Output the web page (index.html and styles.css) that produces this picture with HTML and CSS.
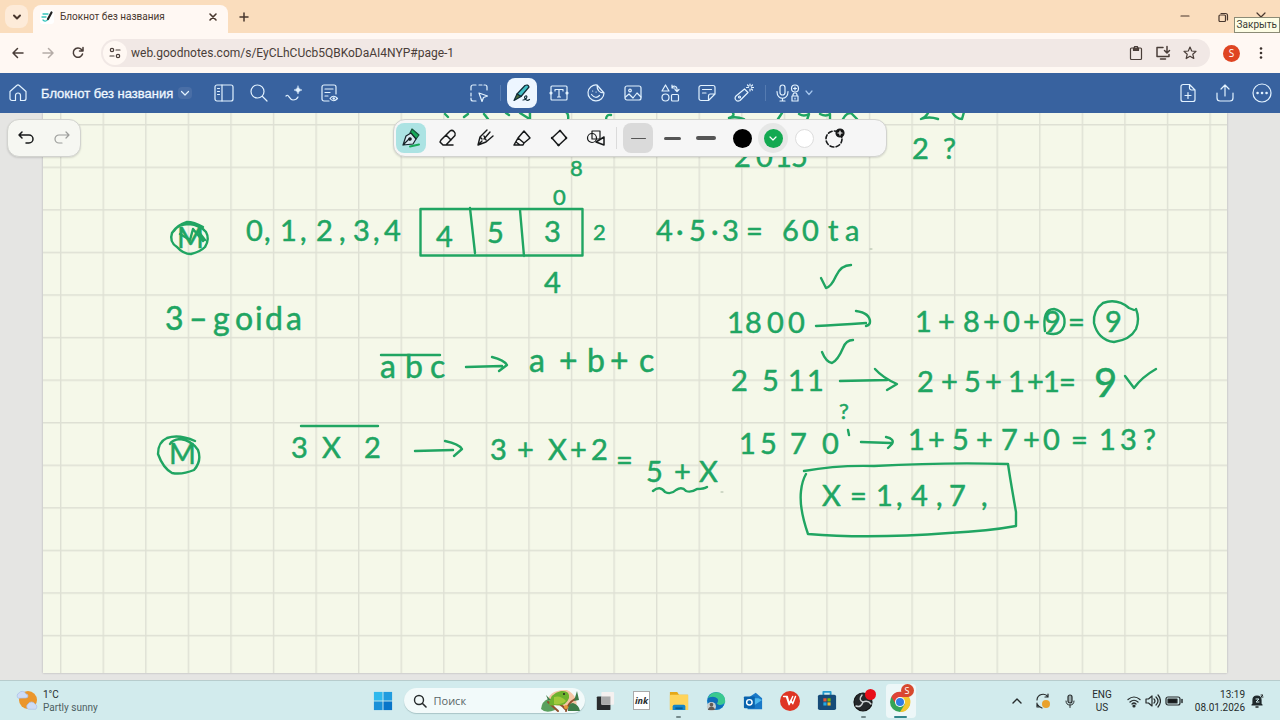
FILE: index.html
```html
<!DOCTYPE html>
<html lang="ru">
<head>
<meta charset="utf-8">
<meta name="viewport" content="width=device-width, initial-scale=1">
<title>Блокнот без названия</title>
<link rel="stylesheet" href="styles.css">
</head>
<body>
<div class="screen">
  <header class="tabstrip">
    <button class="tab-search" aria-label="Поиск вкладок"><svg class="i12" viewBox="0 0 12 12"><path d="M3 4.5l3 3 3-3" stroke-width="2"/></svg></button>
    <div class="tab">
      <svg class="i14" viewBox="0 0 14 14"><rect width="14" height="14" rx="3" fill="#fff" stroke="none"/><path d="M3 4h5M2 7h4M3 10c2 2 4 1 5-1" stroke="#35c3bb" stroke-width="1.3"/><path d="M11.500 2.500L8 9" stroke="#222" stroke-width="2.200"/></svg>
      <span class="tab-title">Блокнот без названия</span>
      <button class="tab-close" aria-label="Закрыть вкладку"><svg class="i12" viewBox="0 0 12 12"><path d="M3 3l6 6M9 3l-6 6" stroke-width="1.600"/></svg></button>
    </div>
    <button class="new-tab" aria-label="Новая вкладка"><svg class="i12" viewBox="0 0 12 12"><path d="M6 2v8M2 6h8" stroke-width="1.500"/></svg></button>
    <div class="window-buttons">
      <button aria-label="Свернуть"><svg class="i12" viewBox="0 0 12 12"><path d="M2 5h8"/></svg></button>
      <button aria-label="Окно"><svg class="i12" viewBox="0 0 12 12"><rect x="2" y="4" width="6.500" height="6.500" rx="1"/><path d="M4 2.500h4.500a2 2 0 0 1 2 2V9"/></svg></button>
      <button aria-label="Закрыть"><svg class="i12" viewBox="0 0 12 12"><path d="M2 2l8 8M10 2l-8 8"/></svg></button>
      <span class="tooltip" role="tooltip">Закрыть</span>
    </div>
  </header>

  <div class="browser-bar">
    <nav class="nav-buttons">
      <button aria-label="Назад"><svg class="i14" viewBox="0 0 14 14"><path d="M12 7H2.500M6.500 2.500L2 7l4.500 4.500" stroke-width="1.500"/></svg></button>
      <button class="faded" aria-label="Вперёд"><svg class="i14" viewBox="0 0 14 14"><path d="M2 7h9.500M7.500 2.500L12 7l-4.500 4.500" stroke-width="1.500"/></svg></button>
      <button aria-label="Обновить"><svg class="i14" viewBox="0 0 14 14"><path d="M11.500 8A4.700 4.700 0 1 1 10.500 3.500L12 5M12 1.500V5H8.500" stroke-width="1.500"/></svg></button>
    </nav>
    <div class="omnibox">
      <button class="site-info" aria-label="Сведения о сайте"><svg class="i14" viewBox="0 0 14 14"><circle cx="4" cy="4" r="1.700"/><path d="M8 4h4M2 10h4"/><circle cx="10" cy="10" r="1.700"/></svg></button>
      <input class="url" type="text" aria-label="Адрес" value="web.goodnotes.com/s/EyCLhCUcb5QBKoDaAI4NYP#page-1">
      <button aria-label="Буфер обмена"><svg class="i16" viewBox="0 0 16 16"><rect x="2.500" y="3" width="11" height="11.500" rx="1"/><path d="M5.500 3v2.500h5V3" fill="#51433d"/><path d="M6.500 3V1.500h3V3"/></svg></button>
      <button aria-label="Установить приложение"><svg class="i16" viewBox="0 0 16 16"><path d="M8 2.500H2v9h12V9.500M5.500 14h5M12 1.500v6M9.500 5.500L12 8l2.500-2.500" stroke-width="1.500"/></svg></button>
      <button aria-label="В закладки"><svg class="i16" viewBox="0 0 16 16"><path d="M8 2l1.700 4 4.300.4-3.200 2.900 1 4.200L8 11.200l-3.800 2.300 1-4.200L2 6.400 6.300 6z"/></svg></button>
    </div>
    <button class="avatar" aria-label="Профиль">S</button>
    <button class="more" aria-label="Меню"><svg class="i14" viewBox="0 0 14 14"><g fill="#3b312d" stroke="none"><circle cx="7" cy="2.500" r="1.300"/><circle cx="7" cy="7" r="1.300"/><circle cx="7" cy="11.500" r="1.300"/></g></svg></button>
  </div>

  <div class="appbar">
    <div class="app-left">
      <button aria-label="Главная"><svg class="i20" viewBox="0 0 20 20"><path d="M7.500 17.500H4a2 2 0 0 1-2-2V8.500L8.700 2.500a2 2 0 0 1 2.600 0L18 8.500v7a2 2 0 0 1-2 2h-3.500V12.500a2.500 2.500 0 0 0-5 0z"/></svg></button>
      <button class="doc-name">Блокнот без названия<span class="name-chevron"><svg class="i12" viewBox="0 0 12 12"><path d="M2.500 4.500L6 8l3.500-3.500"/></svg></span></button>
      <button aria-label="Боковая панель"><svg class="i20" viewBox="0 0 20 20"><rect x="1" y="2" width="18" height="16" rx="2"/><path d="M8 2v16M3.500 5.500h2M3.500 8.500h2M3.500 11.500h2"/></svg></button>
      <button aria-label="Поиск"><svg class="i20" viewBox="0 0 20 20"><circle cx="8.500" cy="8.500" r="6.500"/><path d="M13.500 13.500l4.500 4.500"/></svg></button>
      <button aria-label="ИИ"><svg class="i20" viewBox="0 0 20 20"><path d="M2 13c3-3 3 4 7 4 3 0 4-1 5-3"/><path d="M14 3q.5 3.500 4 4-3.500.5-4 4-.5-3.500-4-4 3.500-.5 4-4z" fill="#e2f2ff" stroke-width=".5"/></svg></button>
      <button aria-label="Просмотр"><svg class="i20" viewBox="0 0 20 20"><path d="M10 18H5a2 2 0 0 1-2-2V4a2 2 0 0 1 2-2h10a2 2 0 0 1 2 2v7M6 6h8M6 9.500h5M6 13h3"/><path d="M11 15.500q3.500-4.500 7.500 0-4 4.500-7.500 0z"/><circle cx="14.700" cy="15.500" r=".7"/></svg></button>
    </div>
    <div class="app-tools">
      <button aria-label="Выделение"><svg class="i20" viewBox="0 0 20 20"><path d="M7 2H4a2 2 0 0 0-2 2v3M2 10v3M2 15v1a2 2 0 0 0 2 2h3M10 2h3M15 2h1a2 2 0 0 1 2 2v3" /><path d="M10 10l8.500 3-4 1.500-1.500 4z"/></svg></button>
      <span class="rule"></span>
      <button class="tool-active" aria-label="Перо"><svg class="i20" viewBox="0 0 20 20"><path d="M5 11L13 2.500q3-1.500 4 1.500L9 13.500z" fill="#42bfc6" stroke="#102c38"/><path d="M5 11l-3 6.500L9 13.500z" fill="#496b39" stroke="#102c38"/><path d="M11 17c4 0 5-5 2.500-4s.5 6 4 3.500" stroke="#102c38"/></svg></button>
      <button aria-label="Текст"><svg class="i20" viewBox="0 0 20 20"><rect x="2" y="3" width="16" height="14" rx="1"/><path d="M6 8V6.500h8V8M10 6.500v7.500M8.500 14h3"/><circle cx="2" cy="10" r="1" fill="#fff"/><circle cx="18" cy="10" r="1" fill="#fff"/></svg></button>
      <button aria-label="Стикеры"><svg class="i20" viewBox="0 0 20 20"><path d="M11 2a8 8 0 1 0 7 8c-4 0-7-2-7-8zM11 2l7 8"/><path d="M5.500 11.500q4 5 8 1M6.500 8h.2M10 9h.2"/></svg></button>
      <button aria-label="Изображение"><svg class="i20" viewBox="0 0 20 20"><rect x="2" y="3" width="16" height="14" rx="2"/><circle cx="7" cy="7.500" r="1.300"/><path d="M2.500 14l3.500-3 4 4 4-5 4 4"/></svg></button>
      <button aria-label="Элементы"><svg class="i20" viewBox="0 0 20 20"><path d="M5.500 2L9 8H2zM12 5c1-3 5-2 5 1v2M15 6.500l2 2 2-2M12 2v3h3"/><circle cx="5.500" cy="14.500" r="3.500"/><rect x="11.500" y="11.500" width="7" height="6.500" rx="1"/></svg></button>
      <button aria-label="Заметка"><svg class="i20" viewBox="0 0 20 20"><path d="M11.500 17.500H4a2 2 0 0 1-2-2v-11a2 2 0 0 1 2-2h12a2 2 0 0 1 2 2V11zM11.500 17.500V13a2 2 0 0 1 2-2H18M5.500 6.500h9M5.500 10H9"/></svg></button>
      <button aria-label="Лазер"><svg class="i20" viewBox="0 0 20 20"><path d="M2 13l8.500-7L14 9.500l-8 8q-3 1.500-4.500-1-1-2 .5-3.500z"/><circle cx="5.500" cy="14" r="1"/><path d="M16 1v2M16 6v2M12.500 4.500h2M17.500 4.500h2M13.500 2l1 1M17.500 6l1 1M18.500 2l-1 1"/></svg></button>
      <span class="rule"></span>
      <button class="mic" aria-label="Запись"><svg class="wide" viewBox="0 0 38 20"><rect x="5" y="2" width="5" height="10" rx="2.500"/><path d="M2 8.500c0 9 11 9 11 0M7.500 15.500V18M5 18h5"/><circle cx="20" cy="5.500" r="3.500"/><path d="M20 4v3M18.500 5.500h3M17 13v5h6v-5zM18 13v-1a2 2 0 0 1 4 0v1M20 15v1"/><path d="M31 8l3 3.500L37 8" stroke="#a4c5ed"/></svg></button>
    </div>
    <div class="app-right">
      <button aria-label="Добавить страницу"><svg class="i20" viewBox="0 0 20 20"><path d="M11.500 1.500H5a2 2 0 0 0-2 2v13a2 2 0 0 0 2 2h10a2 2 0 0 0 2-2V7zM11.500 1.500V5a2 2 0 0 0 2 2H17M10 9.500v6M7 12.500h6"/></svg></button>
      <button aria-label="Поделиться"><svg class="i20" viewBox="0 0 20 20"><path d="M10 13V2M6 6l4-4 4 4M2 10v5a3 3 0 0 0 3 3h10a3 3 0 0 0 3-3v-5"/></svg></button>
      <button aria-label="Ещё"><svg class="i20" viewBox="0 0 20 20"><circle cx="10" cy="10" r="9"/><path d="M5.500 10h.1M10 10h.1M14.500 10h.1" stroke-width="2.500"/></svg></button>
    </div>
  </div>

  <main class="workspace">
    <svg class="page" viewBox="43 113 1184 560" role="img" aria-label="Страница с рукописными записями">
      <defs><pattern id="grid" x="60" y="124" width="42.570" height="42.570" patternUnits="userSpaceOnUse"><path d="M.7 0V42.570M0 .7H42.570" stroke="#dee0d4" stroke-width="1.400"/></pattern></defs>
      <rect x="43" y="113" width="1184" height="560" fill="#f5f8e9"/>
      <rect x="43" y="113" width="1184" height="560" fill="url(#grid)"/>
      <g class="notes">
        <text y="167" x="734 756 775 791">2015</text>
        <text y="176" x="570" class="small">8</text>
        <text y="159" x="912 943">2?</text>
        <text y="248" x="177">M</text>
        <text y="241" x="246 264 280 300 316 339 353 373 384">0,1,2,3,4</text>
        <text y="247" x="436">4</text><text y="243" x="487">5</text><text y="242" x="544">3</text>
        <text y="205" x="553" class="small">0</text><text y="240" x="593" class="small">2</text><text y="293" x="544">4</text>
        <text y="241" x="656 676 689 711 722 746 782 802 828 845">4·5·3=60ta</text>
        <text y="330" x="165 189 213 235 255 265 286" class="lower">3–goida</text>
        <text y="378" x="380 405 430" class="lower">abc</text>
        <text y="372" x="529 559 587 610 639" class="lower">a+b+c</text>
        <text y="333" x="727 745 767 788">1800</text>
        <text y="391" x="731 762 788 807">2511</text>
        <text y="454" x="739 760 790 822">1570</text>
        <text y="332" x="915 938 963 983 1003 1023 1044 1068 1105">1+8+0+9=9</text>
        <text y="392" x="917 941 964 985 1008 1027 1043 1059">2+5+1+1=</text><text y="397" x="1094" class="large">9</text>
        <text y="450" x="908 928 952 976 1001 1023 1043 1071 1099 1120 1143">1+5+7+0=13?</text>
        <text y="464" x="169">M</text>
        <text y="458" x="291 322 364">3X2</text>
        <text y="460" x="490 517 548 570 591">3+X+2</text>
        <text y="470" x="616">=</text><text y="482" x="646 674 699">5+X</text>
        <text y="419" x="839" class="small">?</text>
        <text y="506" x="822 850 876 896 911 936 949 981">X=1,4,7,</text>
      </g>
      <g class="ink">
        <path d="M445 114l3 3M468 114l-4 3M484 114l4 5M506 113l3 2M520 113l8 5M530 112v7M566 112q3 2 2 8M606 120q0-6 5-5"/>
        <path d="M733 113q2 3-4 5 7-2 15 1M778 119l4-6M799 114q5 3 10 0l-2 6M820 114q6 3 10 0v6M843 119q3-6 8-6l6 6M928 113q-2 4-7 6 8-3 17 0M952 112q4 7 10 7l2-7"/>
        <path d="M203 227q-9-5-16-5-10 3-15 11-3 9 5 14 6 7 14 7 9-2 14-7 5-8 1-15-6-7-17-8-11 0-15 7M180 234l10 6 3-11 10 12M198 231l7 9"/>
        <path d="M420.500 209h162v46.500h-162zM470 208l5 45M520 210l4 46"/>
        <path d="M821 278l5 10q5-1 10-12t15-11M822 352q4 10 10 11 6-3 11-15 3-8 10-8"/>
        <path d="M816 326q20-1 50-3M856 311q14 2 14 11 0 3-4 4M840 381l47-1M875 369q8 9 22 15l-10 6M861 442l30 1M886 437q9 2 6 7l-4 4"/>
        <path d="M1045 331q-3-22 9-22 13 3 10 17-4 11-17 7M1134 310l-5-2q-12-10-26-5-10 7-9 20 4 17 20 19 16-2 22-13 4-10 0-20M1125 376l9 12q8-11 22-19"/>
        <path d="M381 355h59M466 367l36-1M492 357q12 3 15 8l-8 6M301 426h77M415 451l38-1M445 441q14 3 17 8l-8 7"/>
        <path d="M195 441q-16-7-28-3-9 4-9 16 5 14 14 19 10 2 22-3 8-9 4-20-7-10-18-11-8 1-10 5M653 491q7-6 12 1 6 3 11-2 6-4 10 1 5 2 11-2 7 0 10-2M848 430l1 5"/>
        <path d="M804 471q32-6 70-5 75-4 134-2 2 14 8 48v14q-27 5-67 7-80 6-141 1-9-26-7-43 1-10 5-17"/>
      </g>
      <path d="M870 249h2M721 492h2" stroke="#a9b8a3" stroke-width="1"/>
    </svg>

    <div class="history">
      <button aria-label="Отменить"><svg class="i20" viewBox="0 0 20 20"><path d="M3 7h10a4 4 0 0 1 0 8h-3M6 4L3 7l3 3" stroke-width="1.500"/></svg></button>
      <button class="faded" aria-label="Повторить"><svg class="i20" viewBox="0 0 20 20"><path d="M17 7H7a4 4 0 0 0 0 8h3M14 4l3 3-3 3"/></svg></button>
    </div>

    <div class="pen-bar">
      <div class="pens">
        <button class="pen-active" aria-label="Перьевая ручка"><svg class="i20" viewBox="0 0 20 20"><path d="M9 5l2-4 7 6-3 4z" fill="#17aa59" stroke="#17543b"/><path d="M2 17L5 8l5-3 5 6-3 5zM2 17l6-6" fill="#d8e9f1" stroke="#17242a"/><circle cx="9" cy="11" r="1.200" fill="#17242a"/><path d="M9 18.500l9-2" stroke="#17aa59" stroke-width="2"/></svg></button>
        <button aria-label="Ластик"><svg class="i20" viewBox="0 0 20 20"><path d="M3 12L12 3q2-1.500 4 .5t1 4L8 17H5l-3-3zM8 7l5 5M9 17h6" stroke-width="1.500"/></svg></button>
        <button aria-label="Карандаш"><svg class="i20" viewBox="0 0 20 20"><path d="M12 2L5 9 3 17l8-3 7-6M3 17l4-4M5 9l2 2M9 8l2 4M9 11l6-7" stroke-width="1.400"/></svg></button>
        <button aria-label="Маркер"><svg class="i20" viewBox="0 0 20 20"><path d="M12 3l6 7-6 5-6-5zM6 10l-4 7h9l1-2M4 14l4 3" stroke-width="1.500"/></svg></button>
        <button aria-label="Форма"><svg class="i20" viewBox="0 0 20 20"><path d="M11 2.500l6.500 7.500-8 7.500L3 10z" stroke-width="1.500"/><path d="M11 3h.1M17 10h.1M9.500 17h.1M3 10h.1" stroke-width="2.400"/></svg></button>
        <button aria-label="Фигуры"><svg class="i20" viewBox="0 0 20 20"><circle cx="6" cy="10" r="4.500"/><rect x="6" y="3" width="8" height="8"/><path d="M10 14l8-5v8z" stroke-width="1.500"/></svg></button>
      </div>
      <span class="pen-rule"></span>
      <div class="widths">
        <button class="width-active" aria-label="Тонкая линия"><span class="line thin"></span></button>
        <button aria-label="Средняя линия"><span class="line medium"></span></button>
        <button aria-label="Толстая линия"><span class="line thick"></span></button>
      </div>
      <div class="colors">
        <button aria-label="Чёрный"><span class="dot black"></span></button>
        <button class="color-active" aria-label="Зелёный"><span class="dot green"><svg class="i12" viewBox="0 0 12 12"><path d="M3 5l3 3 3-3"/></svg></span></button>
        <button aria-label="Белый"><span class="dot white"></span></button>
        <button aria-label="Добавить цвет"><svg class="i20" viewBox="0 0 20 20"><circle cx="9" cy="11" r="8" stroke-dasharray="4 2.300" stroke-width="1.600"/><circle cx="15" cy="5" r="4" fill="#111"/><path d="M15 3v4M13 5h4" stroke="#fff" stroke-width="1.200"/></svg></button>
      </div>
    </div>
  </main>

  <footer class="taskbar">
    <button class="weather">
      <svg class="i24" viewBox="0 0 24 24"><circle cx="13" cy="11" r="9" fill="#eb962c" stroke="none"/><path d="M3 9a3 3 0 0 1 1-5 4 4 0 0 1 7 1 2 2 0 0 1 0 4zM13 20a3 3 0 0 1 0-5 4 4 0 0 1 7 0 3 3 0 0 1 1 5z" fill="#cedcf6" stroke="#a9bfe8" stroke-width=".7"/></svg>
      <span class="weather-text"><span>1°C</span><span class="muted">Partly sunny</span></span>
    </button>
    <div class="apps">
      <button aria-label="Пуск"><svg class="i22" viewBox="0 0 22 22"><g stroke="none"><path d="M1 1h9.500v9.500H1z" fill="#30b9ed"/><path d="M11.500 1H21v9.500h-9.500z" fill="#219cdf"/><path d="M1 11.500h9.500V21H1z" fill="#1b91d8"/><path d="M11.500 11.500H21V21h-9.500z" fill="#0875c9"/></g></svg></button>
      <div class="search">
        <svg class="i14" viewBox="0 0 14 14"><circle cx="6" cy="6" r="4.500" stroke-width="1.400"/><path d="M9.500 9.500L13 13" stroke-width="1.600"/></svg>
        <input type="search" aria-label="Поиск" placeholder="Поиск">
        <svg class="parrot" viewBox="0 0 42 24"><path d="M7 15Q8 0 27 1q12 6 9 19z" fill="#f4c5a5" stroke="none"/><path d="M1 20q1-8 7-10 6 4 7 11-9 4-14-1z" fill="#5aa05e" stroke="none"/><path d="M11 12q10 2 14 8M8 13l10 9M26 22q2-8 9-12" stroke="#91502d" stroke-width="2"/><path d="M9 16q1-12 12-14 9-1 8 7-3 9-14 7-3 1-6 0z" fill="#6eb22e" stroke="none"/><path d="M14 8q7-2 12 4-5 4-12 3z" fill="#a1c93b" stroke="none"/><circle cx="24" cy="5" r="1" fill="#222" stroke="none"/><path d="M28 22q0-8 5-8 6 2 7 8zM34 12l3-10 2 9zM8 11L6 6l5 5z" fill="#3d7c48" stroke="none"/><circle cx="26" cy="18" r="2" fill="#e69a39" stroke="none"/></svg>
      </div>
      <button aria-label="Представление задач"><svg class="i22" viewBox="0 0 22 22"><g stroke="none"><rect x="2" y="6" width="15" height="15" rx="1" fill="#292b2d"/><rect x="7" y="1" width="14" height="14" rx="1" fill="#f5f1f0"/><rect x="7" y="6" width="10" height="9" fill="#aaa"/></g></svg></button>
      <button aria-label="Ink"><span class="ink-app">ink</span></button>
      <button class="running" aria-label="Проводник"><svg class="i22" viewBox="0 0 22 22"><g stroke="none"><path d="M1 1h8l2 3h10v17H1z" fill="#e5a819"/><rect x="1" y="4" width="20" height="17" rx="1" fill="#ffd45a"/><path d="M4 21v-4q0-2 2-2h10q2 0 2 2v4z" fill="#1686c8"/><path d="M7 18h8v2H7z" fill="#075c93"/></g></svg></button>
      <button aria-label="Edge"><svg class="i22" viewBox="0 0 22 22"><g stroke="none"><circle cx="11" cy="11" r="10" fill="#1682c9"/><path d="M2 8Q6-1 15 2q7 3 6 11-5 4-10 2 5-7-2-8-4-1-7 1z" fill="#3ac98f"/><path d="M2 8q7-4 11 1 1 2-1 5 4 3 8 1-4 6-12 5Q2 16 2 8z" fill="#0f6eb9"/><circle cx="6" cy="17" r="5" fill="#c8cecf"/><circle cx="6" cy="15" r="2" fill="#635b56"/><path d="M2 21q1-4 4-4t4 4z" fill="#635b56"/></g></svg></button>
      <button aria-label="Outlook"><svg class="i22" viewBox="0 0 22 22"><path d="M5 8l9-6 7 6v12H5z" fill="#1979c8" stroke="none"/><path d="M5 8h12l4 2-9 6z" fill="#50b9ed" stroke="none"/><rect x="1" y="6" width="12" height="13" rx="1" fill="#0963ae" stroke="none"/><circle cx="7" cy="12.500" r="3" stroke="#fff" stroke-width="1.600"/></svg></button>
      <button aria-label="WPS"><svg class="i22" viewBox="0 0 22 22"><circle cx="11" cy="11" r="11" fill="#df3524" stroke="none"/><path d="M4 6h4l2 8 2-4 2 4 3-8M7 6l3 9 4-9" stroke="#fff" stroke-width="1.600"/></svg></button>
      <button aria-label="Store"><svg class="i22" viewBox="0 0 22 22"><path d="M7 5V1h8v4" stroke="#249bcf" stroke-width="2"/><rect x="1" y="4" width="20" height="17" rx="2" fill="#164b78" stroke="none"/><g stroke="none"><path d="M7 8h3.500v3.500H7z" fill="#e95734"/><path d="M11.500 8H15v3.500h-3.500z" fill="#7fba00"/><path d="M7 12.500h3.500V16H7z" fill="#27a9e0"/><path d="M11.500 12.500H15V16h-3.500z" fill="#f5bb2b"/></g></svg></button>
      <button class="running" aria-label="OBS"><svg class="i24" viewBox="0 0 24 24"><circle cx="11" cy="13" r="9" fill="#24282b" stroke="#111"/><path d="M10 6q-4 5 1 7 5-2 8 2M11 13q-2 6-7 4" stroke="#ccd2d3" stroke-width="1.500"/><circle cx="18.500" cy="5.500" r="5.500" fill="#e80e19" stroke="none"/></svg></button>
      <button class="running current" aria-label="Chrome"><svg class="i24" viewBox="0 0 24 24"><g stroke="none"><circle cx="11" cy="13" r="10" fill="#35a457"/><path d="M2.300 8A10 10 0 0 1 20 8H11l-4 7z" fill="#df4337"/><path d="M20 8a10 10 0 0 1-9 15l5-8q0-5-5-7z" fill="#f4c62e"/><circle cx="11" cy="13" r="5" fill="#fff"/><circle cx="11" cy="13" r="4" fill="#317de4"/></g></svg><span class="badge">S</span></button>
    </div>
    <div class="tray">
      <button aria-label="Скрытые значки"><svg class="i12" viewBox="0 0 12 12"><path d="M2 8l4-4 4 4" stroke-width="1.400"/></svg></button>
      <button aria-label="Обновления"><svg class="i16" viewBox="0 0 16 16"><path d="M2 7a6 6 0 0 1 11-3V1M13 4h-3M2 10v4h3M2 11q2 3 5 4"/><circle cx="11" cy="11" r="4" fill="#e9a22c" stroke="none"/></svg></button>
      <button aria-label="Микрофон"><svg class="i14" viewBox="0 0 14 14"><rect x="5" y="1" width="4" height="8" rx="2" fill="#9cacae"/><path d="M3 7q0 4 4 4t4-4M7 11v2.500" stroke-width="1"/></svg></button>
      <button class="lang"><span>ENG</span><span>US</span></button>
      <button class="status" aria-label="Сеть, звук, батарея">
        <svg class="i14" viewBox="0 0 14 14"><path d="M1 5.500q6-5 12 0M3 8q4-3.500 8 0M5 10q2-2 4 0"/><circle cx="7" cy="12" r="1" fill="#222"/></svg>
        <svg class="i16" viewBox="0 0 16 16"><path d="M1 6h2.500L7 3v10l-3.500-3H1zM9 6q2 2 0 4M11 4q4 4 0 8M13 2q5 6 0 12"/></svg>
        <svg class="i18" viewBox="0 0 18 18"><rect x="1" y="5" width="14" height="8" rx="2"/><rect x="3" y="7" width="9" height="4" fill="#171b1c"/><path d="M17 7.500v3" stroke-width="1.500"/></svg>
      </button>
      <button class="clock"><span>13:19</span><span>08.01.2026</span></button>
      <button aria-label="Уведомления"><svg class="i14" viewBox="0 0 14 14"><path d="M3 10V6q0-4 4-4t4 4v4l1 1H2z" fill="#1e282b" stroke="#1e282b"/><path d="M6 13h2" stroke-width="1.500"/><path d="M6 5h3L6 8h3" stroke="#d2ebed" stroke-width="1"/><path d="M11 1h2l-2 2h2" stroke-width="1"/></svg></button>
    </div>
  </footer>
</div>
</body>
</html>
```
FILE: styles.css
```css
* { box-sizing: border-box; }

body {
  margin: 0;
  font-family: "Open Sans", "Noto Sans", sans-serif;
  color: #262b2c;
}

button, input {
  font: inherit;
  color: inherit;
  border: 0;
  padding: 0;
  background: none;
}

button {
  display: flex;
  align-items: center;
  justify-content: center;
  flex: none;
}

svg {
  display: block;
  flex: none;
  fill: none;
  stroke: currentColor;
  stroke-width: 1.2;
  stroke-linecap: round;
  stroke-linejoin: round;
}

.i12 { width: 12px; height: 12px; }
.i14 { width: 14px; height: 14px; }
.i16 { width: 16px; height: 16px; }
.i18 { width: 18px; height: 18px; }
.i20 { width: 20px; height: 20px; }
.i22 { width: 20px; height: 20px; }
.i24 { width: 24px; height: 24px; }
.wide { width: 38px; height: 20px; }

.screen {
  min-height: 100vh;
  display: flex;
  flex-direction: column;
}

/* Browser tabs */
.tabstrip {
  height: 33px;
  display: flex;
  padding: 5px 0 0 5px;
  background: #faddbd;
  color: #48372e;
}
.tab-search {
  width: 23px;
  height: 23px;
  border-radius: 8px;
  background: #fdebd9;
}
.tab {
  width: 195px;
  height: 28px;
  margin-left: 5px;
  padding: 0 7px;
  display: flex;
  align-items: center;
  gap: 6px;
  border-radius: 8px 8px 0 0;
  background: #fff8f3;
}
.tab-title { flex: 1; margin-top: -4px; font-family: Roboto, sans-serif; font-size: 10px; line-height: 16px; white-space: nowrap; }
.tab-close, .tab .i14 { margin-top: -4px; }
.tab-close { width: 16px; height: 16px; }
.new-tab { width: 32px; height: 23px; }
.window-buttons {
  margin-left: auto;
  display: flex;
  position: relative;
}
.window-buttons button { width: 38px; height: 23px; }
.tooltip {
  position: absolute;
  right: 0;
  top: 12px;
  padding: 0 2px;
  border: 1px solid #8b8b76;
  background: #fdfde5;
  color: #3b3b35;
  font-family: Roboto, sans-serif;
  font-size: 10px;
  line-height: 14px;
}

/* Address row */
.browser-bar {
  height: 40px;
  display: flex;
  align-items: center;
  padding: 0 10px 0 8px;
  background: #fff8f3;
  color: #493d38;
}
.nav-buttons { display: flex; gap: 10px; padding-right: 13px; }
.nav-buttons button { width: 20px; height: 20px; }
.faded { opacity: .4; }
.omnibox {
  flex: 1;
  height: 28px;
  display: flex;
  align-items: center;
  gap: 11px;
  padding: 0 12px 0 2px;
  border-radius: 14px;
  background: #f1e8e5;
}
.site-info { width: 24px; height: 24px; border-radius: 50%; background: #fff8f3; }
.url { flex: 1; min-width: 0; margin-left: -7px; font-family: Roboto, sans-serif; font-size: 12px; line-height: 20px; }
.avatar {
  width: 17px;
  height: 17px;
  margin-left: 13px;
  border-radius: 50%;
  background: #df4522;
  color: #fff;
  font-size: 10px;
}
.more { width: 18px; height: 20px; margin-left: 12px; }

/* Notebook header */
.appbar {
  height: 40px;
  display: grid;
  grid-template-columns: 1fr auto 1fr;
  align-items: center;
  padding: 0 6px;
  background: #38629f;
  color: #e2f2ff;
}
.app-left, .app-right, .app-tools { display: flex; align-items: center; }
.app-left { gap: 11px; }
.app-left button { min-width: 24px; height: 24px; }
.app-left .doc-name {
  gap: 5px;
  margin-right: 9px;
  font-family: "Liberation Sans", sans-serif;
  font-size: 13px;
  -webkit-text-stroke: 0.3px #fff;
  white-space: nowrap;
}
.name-chevron { display: flex; padding: 0 1px; border-radius: 4px; background: #496ea6; }
.app-tools { gap: 7px; }
.app-tools button { width: 30px; height: 30px; border-radius: 8px; }
.app-tools .tool-active { background: #edf6ff; }
.app-tools .mic { width: 44px; }
.rule { width: 1px; height: 16px; margin: 0 -1px; background: #557bb1; }
.app-right { justify-content: flex-end; gap: 13px; }
.app-right button { width: 24px; height: 24px; }

/* Paper and ink */
.workspace {
  flex: 1;
  position: relative;
  overflow: hidden;
  padding: 0 53px 7px 43px;
  background: #e5e5e3;
}
.page { width: 100%; height: auto; stroke: none; box-shadow: 0 0 2px #aaa; }
.notes {
  font-family: Lato, sans-serif;
  font-size: 29px;
  fill: #20a562;
  stroke: #20a562;
  stroke-width: .5;
}
.notes .small { font-size: 22px; }
.notes .lower { font-size: 32px; }
.notes .large { font-size: 40px; }
.ink { stroke: #20a562; stroke-width: 2.4; }

/* Floating palettes */
.history, .pen-bar {
  position: absolute;
  top: 6px;
  height: 38px;
  display: flex;
  align-items: center;
  border: 1px solid #d2d3cf;
  border-radius: 12px;
  background: #f6f6f6;
  color: #17191a;
  box-shadow: 0 1px 2px #0002;
}
.history { left: 7px; gap: 16px; padding: 0 8px; background: #f6f7f2; }
.pen-bar { left: 50%; transform: translateX(-50%); padding: 0 36px 0 2px; }
.pens, .widths, .colors { display: flex; align-items: center; }
.pens { gap: 7px; }
.widths { gap: 4px; margin-right: 6px; }
.colors { gap: 1px; }
.pen-bar button { width: 30px; height: 30px; border-radius: 8px; }
.pen-bar .pen-active { background: #ace3e3; }
.pen-bar .width-active { background: #dadada; }
.pen-rule { width: 1px; height: 22px; margin: 0 6px 0 5px; background: #dbdbdb; }
.line { border-radius: 2px; background: #555; }
.thin { width: 15px; height: 1px; }
.medium { width: 17px; height: 3px; }
.thick { width: 20px; height: 4px; }
.dot { width: 19px; height: 19px; display: grid; place-items: center; border-radius: 50%; color: #fff; }
.black { background: #000; }
.green { background: #13a951; }
.white { background: #fff; border: 1px solid #ddd; }
.pen-bar .color-active { border-radius: 50%; background: #e6e7e6; }

/* Windows taskbar */
.taskbar {
  min-height: 40px;
  display: grid;
  grid-template-columns: 1fr auto 1fr;
  align-items: center;
  padding: 0 12px 0 15px;
  border-top: 1px solid #b7cccd;
  background: #d2ebed;
}
.weather { justify-self: start; gap: 4px; text-align: left; font-family: Roboto, sans-serif; font-size: 10px; line-height: 13px; }
.weather-text, .lang, .clock { display: flex; flex-direction: column; }
.muted { color: #4d6062; }
.apps { display: flex; align-items: center; gap: 7px; }
.apps button { width: 30px; height: 34px; border-radius: 4px; position: relative; }
.search {
  width: 181px;
  height: 25px;
  margin: 0 -2px 0 -1px;
  display: flex;
  align-items: center;
  gap: 7px;
  padding: 0 3px 0 9px;
  border-radius: 13px;
  background: #f2fafa;
  box-shadow: 0 1px 1px #a9c5c7;
}
.search input { flex: 1; min-width: 0; font-size: 11px; line-height: 18px; outline: 0; }
.search input::placeholder { color: #596466; opacity: 1; }
.parrot { width: 42px; height: 24px; }
.ink-app { padding: 0 1px; border: 1px solid #aaa; background: #fff; font-size: 9px; font-weight: 700; font-style: italic; line-height: 17px; }
.running::after {
  content: "";
  position: absolute;
  bottom: 0;
  width: 5px;
  height: 2px;
  border-radius: 1px;
  background: #748a8c;
}
.apps .current { background: #edf7f8; }
.apps .current::after { width: 13px; background: #32868c; }
.badge {
  position: absolute;
  top: 0;
  right: 2px;
  width: 13px;
  height: 13px;
  border-radius: 50%;
  background: #d7492e;
  color: #fff;
  font-size: 9px;
  line-height: 13px;
  text-align: center;
}
.tray {
  display: flex;
  justify-content: flex-end;
  align-items: center;
  gap: 12px;
  padding-right: 4px;
  font-family: Roboto, sans-serif;
  font-size: 10px;
  line-height: 13px;
}
.lang { margin: 0 3px; }
.status { gap: 4px; }
.clock { align-items: flex-end; margin-right: -7px; }
```
